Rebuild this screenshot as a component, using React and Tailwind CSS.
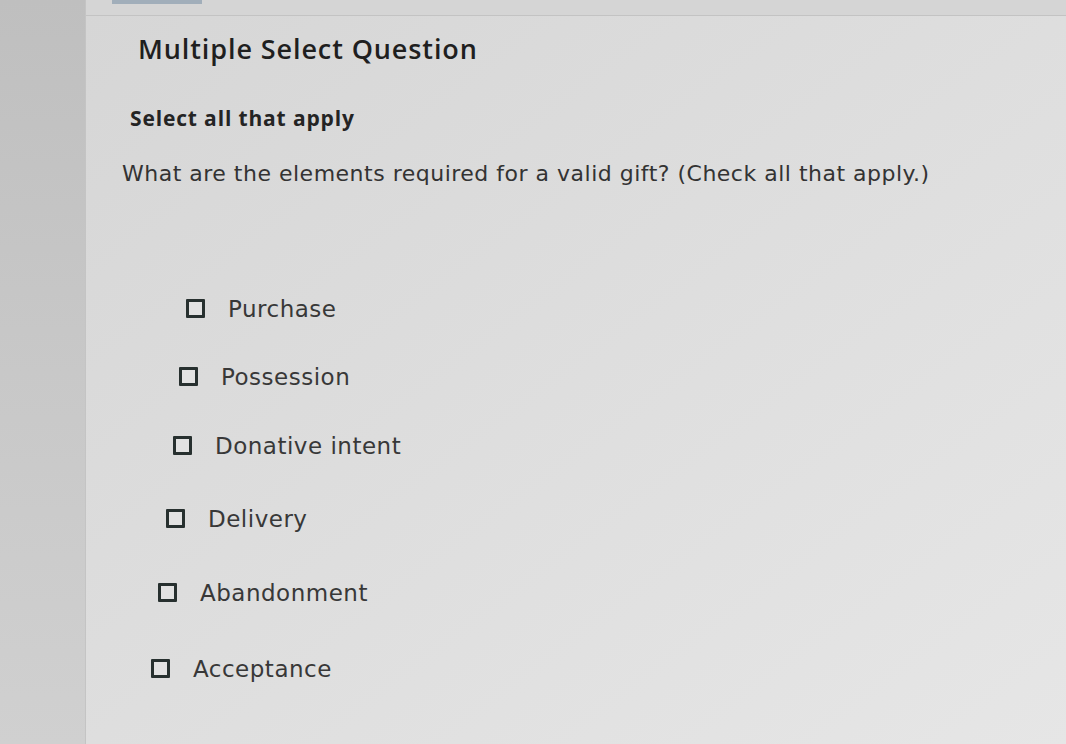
import React from "react";

const options = [
  { label: "Purchase", cls: "ml-[100px] h-[68px]" },
  { label: "Possession", cls: "ml-[93px] h-[69px]" },
  { label: "Donative intent", cls: "ml-[87px] h-[73px]" },
  { label: "Delivery", cls: "ml-[80px] h-[74px]" },
  { label: "Abandonment", cls: "ml-[72px] h-[76px] tracking-[0.9px]" },
  { label: "Acceptance", cls: "ml-[65px] h-[76px] tracking-[1px]" },
];

const Box = () => (
  <span className="inline-block w-[19px] h-[19px] border-[3px] border-[#27302f] rounded-[1px] bg-[#e2e2e2] shrink-0" />
);

export default function App() {
  return (
    <div
      className="w-[1066px] h-[744px] overflow-hidden flex bg-[#d6d6d6] text-[#303030]"
      style={{ fontFamily: '"Open Sans", "Liberation Sans", sans-serif' }}
    >
      {/* left margin of the page */}
      <div className="w-[86px] shrink-0 bg-gradient-to-b from-[#bfbfbf] via-[#c8c8c8] to-[#d0d0d0] border-r border-[#c4c4c4]" />

      <div className="flex-1 flex flex-col">
        <div className="h-[16px] shrink-0 bg-[#d5d5d5] border-b border-[#c3c3c3] flex">
          <div className="ml-[26px] w-[90px] h-[4px] bg-[#7f95a8] opacity-60" />
        </div>

        <div className="flex-1 bg-gradient-to-br from-[#d6d6d6] via-[#dedede] to-[#e6e6e6] flex flex-col">
          <h1 className="ml-[52px] mt-[16px] text-[27px] font-semibold tracking-[0.9px] text-[#1f1f1f] leading-[34px]">
            Multiple Select Question
          </h1>

          <p className="ml-[44px] mt-[38px] text-[21px] font-bold tracking-[0.85px] text-[#242424] leading-[28px]">
            Select all that apply
          </p>

          <p
            className="ml-[36px] mt-[27px] text-[22px] tracking-[0.5px] text-[#333] leading-[30px]"
            style={{ fontFamily: '"DejaVu Sans", sans-serif' }}
          >
            What are the elements required for a valid gift? (Check all that apply.)
          </p>

          <div className="mt-[110px] flex flex-col" style={{ fontFamily: '"DejaVu Sans", sans-serif' }}>
            {options.map((o) => (
              <div key={o.label} className={`flex items-start gap-[23px] ${o.cls}`}>
                <Box />
                <span className="text-[23px] tracking-[0.5px] leading-[20px] text-[#383838]">{o.label}</span>
              </div>
            ))}
          </div>
        </div>
      </div>
    </div>
  );
}
